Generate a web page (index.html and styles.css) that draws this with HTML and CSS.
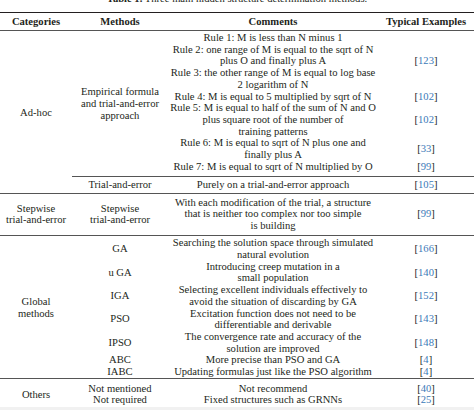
FILE: index.html
```html
<!DOCTYPE html>
<html>
<head>
<meta charset="utf-8">
<link rel="stylesheet" href="styles.css">
</head>
<body>
<div class="caption"><b>Table 1.</b> Three main hidden structure determination methods.</div>
<table class="tbl">
  <colgroup>
    <col class="c1"><col class="c2"><col class="c3"><col class="c4">
  </colgroup>
  <thead>
    <tr><th>Categories</th><th>Methods</th><th>Comments</th><th>Typical Examples</th></tr>
  </thead>
  <tbody>
    <tr class="r-first">
      <td rowspan="6">Ad-hoc</td>
      <td rowspan="5">Empirical formula<br>and trial-and-error<br>approach</td>
      <td>Rule 1: M is less than N minus 1<br>Rule 2: one range of M is equal to the sqrt of N<br>plus O and finally plus A<br>Rule 3: the other range of M is equal to log base<br>2 logarithm of N</td>
      <td>[<span class="ref">123</span>]</td>
    </tr>
    <tr><td>Rule 4: M is equal to 5 multiplied by sqrt of N</td><td>[<span class="ref">102</span>]</td></tr>
    <tr><td>Rule 5: M is equal to half of the sum of N and O<br>plus square root of the number of<br>training patterns</td><td>[<span class="ref">102</span>]</td></tr>
    <tr><td>Rule 6: M is equal to sqrt of N plus one and<br>finally plus A</td><td>[<span class="ref">33</span>]</td></tr>
    <tr class="r-last"><td>Rule 7: M is equal to sqrt of N multiplied by O</td><td>[<span class="ref">99</span>]</td></tr>
    <tr class="r-trial sep"><td>Trial-and-error</td><td>Purely on a trial-and-error approach</td><td>[<span class="ref">105</span>]</td></tr>
    <tr class="r-step sep">
      <td>Stepwise<br>trial-and-error</td>
      <td>Stepwise<br>trial-and-error</td>
      <td>With each modification of the trial, a structure<br>that is neither too complex nor too simple<br>is building</td>
      <td>[<span class="ref">99</span>]</td>
    </tr>
    <tr class="r-ga sep">
      <td rowspan="7">Global<br>methods</td>
      <td>GA</td>
      <td>Searching the solution space through simulated<br>natural evolution</td>
      <td>[<span class="ref">166</span>]</td>
    </tr>
    <tr><td>u GA</td><td>Introducing creep mutation in a<br>small population</td><td>[<span class="ref">140</span>]</td></tr>
    <tr><td>IGA</td><td>Selecting excellent individuals effectively to<br>avoid the situation of discarding by GA</td><td>[<span class="ref">152</span>]</td></tr>
    <tr><td>PSO</td><td>Excitation function does not need to be<br>differentiable and derivable</td><td>[<span class="ref">143</span>]</td></tr>
    <tr><td>IPSO</td><td>The convergence rate and accuracy of the<br>solution are improved</td><td>[<span class="ref">148</span>]</td></tr>
    <tr><td>ABC</td><td>More precise than PSO and GA</td><td>[<span class="ref">4</span>]</td></tr>
    <tr><td>IABC</td><td>Updating formulas just like the PSO algorithm</td><td>[<span class="ref">4</span>]</td></tr>
    <tr class="r-oth sep">
      <td rowspan="2">Others</td>
      <td>Not mentioned</td><td>Not recommend</td><td>[<span class="ref">40</span>]</td>
    </tr>
    <tr class="r-oth2"><td>Not required</td><td>Fixed structures such as GRNNs</td><td>[<span class="ref">25</span>]</td></tr>
  </tbody>
</table>
<div class="foot"></div>
</body>
</html>
```
FILE: styles.css
```css
html, body {
  margin: 0;
  padding: 0;
  background: #ffffff;
}
body {
  width: 474px;
  height: 410px;
  overflow: hidden;
  font-family: "Liberation Serif", "Times New Roman", serif;
  font-size: 10.6px;
  line-height: 11.7px;
  color: #231f20;
}
.caption {
  margin-top: -7px;
  margin-bottom: 7.3px;
  text-align: center;
  white-space: nowrap;
}
.tbl {
  width: 474px;
  border-collapse: collapse;
  table-layout: fixed;
}
.c1 { width: 72px; }
.c2 { width: 96px; }
.c3 { width: 210px; }
.c4 { width: 96px; }
.tbl th, .tbl td {
  padding: 0 2px;
  text-align: center;
  vertical-align: middle;
  white-space: nowrap;
  font-weight: normal;
}
.tbl th {
  font-weight: bold;
  padding-top: 2.6px;
  padding-bottom: 2.6px;
  border-top: 1.4px solid #231f20;
  border-bottom: 1px solid #555;
}
.tbl tr.sep > td {
  border-top: 1px solid #555;
}
.tbl tr.r-first > td { padding-top: 1.2px; }
.tbl tr.r-last > td { padding-bottom: 3.3px; }
.tbl tr.r-trial > td { padding-top: 2.1px; padding-bottom: 2.1px; }
.tbl tr.r-step > td { padding-top: 3px; padding-bottom: 3px; }
.tbl tr.r-ga > td { padding-top: 1.5px; }
.tbl tr.r-oth > td { padding-top: 4px; }
.tbl tr.r-oth2 > td { padding-bottom: 0.5px; }
.ref {
  color: #3b79b8;
}
.foot {
  height: 20px;
  background: #f1f1f1;
}
```
